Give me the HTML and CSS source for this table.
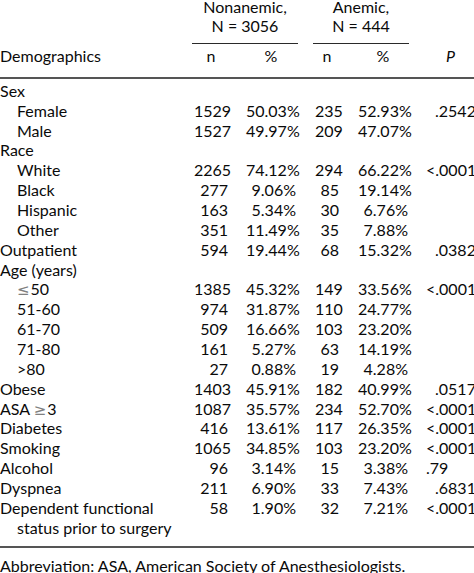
FILE: index.html
```html
<!DOCTYPE html>
<html lang="en">
<head>
<meta charset="utf-8">
<title>Demographics by anemia status</title>
<link rel="stylesheet" href="styles.css">
</head>
<body>
<div class="page">
<table class="tbl">
  <colgroup>
    <col class="c-label"><col class="c-n1"><col class="c-p1"><col class="c-n2"><col class="c-p2"><col class="c-p">
  </colgroup>
  <thead>
    <tr class="grp">
      <th></th>
      <th colspan="2" class="grp-cell"><div class="grp-box grp-non"><div class="g1">Nonanemic,</div><div class="g2">N = 3056</div></div></th>
      <th colspan="2" class="grp-cell"><div class="grp-box grp-an"><div class="g1">Anemic,</div><div class="g2">N = 444</div></div></th>
      <th></th>
    </tr>
    <tr class="sub">
      <th class="lbl">Demographics</th>
      <th class="hn n1">n</th>
      <th class="hn p1">%</th>
      <th class="hn n2">n</th>
      <th class="hn p2">%</th>
      <th class="hn pv"><i>P</i></th>
    </tr>
  </thead>
  <tbody>
    <tr class="first"><td class="lbl">Sex</td><td></td><td></td><td></td><td></td><td></td></tr>
    <tr><td class="lbl ind">Female</td><td class="num n1">1529</td><td class="num p1">50.03%</td><td class="num n2">235</td><td class="num p2">52.93%</td><td class="pv dec">.2542</td></tr>
    <tr><td class="lbl ind">Male</td><td class="num n1">1527</td><td class="num p1">49.97%</td><td class="num n2">209</td><td class="num p2">47.07%</td><td class="pv"></td></tr>
    <tr><td class="lbl">Race</td><td></td><td></td><td></td><td></td><td></td></tr>
    <tr><td class="lbl ind">White</td><td class="num n1">2265</td><td class="num p1">74.12%</td><td class="num n2">294</td><td class="num p2">66.22%</td><td class="pv">&lt;.0001</td></tr>
    <tr><td class="lbl ind">Black</td><td class="num n1">277</td><td class="num p1">9.06%</td><td class="num n2">85</td><td class="num p2">19.14%</td><td class="pv"></td></tr>
    <tr><td class="lbl ind">Hispanic</td><td class="num n1">163</td><td class="num p1">5.34%</td><td class="num n2">30</td><td class="num p2">6.76%</td><td class="pv"></td></tr>
    <tr><td class="lbl ind">Other</td><td class="num n1">351</td><td class="num p1">11.49%</td><td class="num n2">35</td><td class="num p2">7.88%</td><td class="pv"></td></tr>
    <tr><td class="lbl">Outpatient</td><td class="num n1">594</td><td class="num p1">19.44%</td><td class="num n2">68</td><td class="num p2">15.32%</td><td class="pv dec">.0382</td></tr>
    <tr><td class="lbl">Age (years)</td><td></td><td></td><td></td><td></td><td></td></tr>
    <tr><td class="lbl ind"><span class="rel">&le;</span>50</td><td class="num n1">1385</td><td class="num p1">45.32%</td><td class="num n2">149</td><td class="num p2">33.56%</td><td class="pv">&lt;.0001</td></tr>
    <tr><td class="lbl ind">51-60</td><td class="num n1">974</td><td class="num p1">31.87%</td><td class="num n2">110</td><td class="num p2">24.77%</td><td class="pv"></td></tr>
    <tr><td class="lbl ind">61-70</td><td class="num n1">509</td><td class="num p1">16.66%</td><td class="num n2">103</td><td class="num p2">23.20%</td><td class="pv"></td></tr>
    <tr><td class="lbl ind">71-80</td><td class="num n1">161</td><td class="num p1">5.27%</td><td class="num n2">63</td><td class="num p2">14.19%</td><td class="pv"></td></tr>
    <tr><td class="lbl ind">&gt;80</td><td class="num n1">27</td><td class="num p1">0.88%</td><td class="num n2">19</td><td class="num p2">4.28%</td><td class="pv"></td></tr>
    <tr><td class="lbl">Obese</td><td class="num n1">1403</td><td class="num p1">45.91%</td><td class="num n2">182</td><td class="num p2">40.99%</td><td class="pv dec">.0517</td></tr>
    <tr><td class="lbl">ASA <span class="rel">&ge;</span>3</td><td class="num n1">1087</td><td class="num p1">35.57%</td><td class="num n2">234</td><td class="num p2">52.70%</td><td class="pv">&lt;.0001</td></tr>
    <tr><td class="lbl">Diabetes</td><td class="num n1">416</td><td class="num p1">13.61%</td><td class="num n2">117</td><td class="num p2">26.35%</td><td class="pv">&lt;.0001</td></tr>
    <tr><td class="lbl">Smoking</td><td class="num n1">1065</td><td class="num p1">34.85%</td><td class="num n2">103</td><td class="num p2">23.20%</td><td class="pv">&lt;.0001</td></tr>
    <tr><td class="lbl">Alcohol</td><td class="num n1">96</td><td class="num p1">3.14%</td><td class="num n2">15</td><td class="num p2">3.38%</td><td class="pv">.79</td></tr>
    <tr><td class="lbl">Dyspnea</td><td class="num n1">211</td><td class="num p1">6.90%</td><td class="num n2">33</td><td class="num p2">7.43%</td><td class="pv dec">.6831</td></tr>
    <tr class="last"><td class="lbl hang">Dependent functional<br>status prior to surgery</td><td class="num n1">58</td><td class="num p1">1.90%</td><td class="num n2">32</td><td class="num p2">7.21%</td><td class="pv">&lt;.0001</td></tr>
  </tbody>
</table>
<p class="note">Abbreviation: ASA, American Society of Anesthesiologists.</p>
</div>
</body>
</html>
```
FILE: styles.css
```css
html, body {
  margin: 0;
  padding: 0;
  background: #ffffff;
  overflow: hidden;
}
body {
  width: 474px;
  height: 573px;
  font-family: "Lato", "Liberation Sans", sans-serif;
  font-size: 16px;
  line-height: 19.86px;
  color: #0a0a0a;
}
.page {
  width: 500px;
}
.tbl {
  border-collapse: collapse;
  table-layout: fixed;
  width: 500px;
}
.c-label { width: 194px; }
.c-n1 { width: 34px; }
.c-p1 { width: 68px; }
.c-n2 { width: 43px; }
.c-p2 { width: 69px; }
.c-p { width: 92px; }

th, td {
  padding: 0;
  font-weight: normal;
  white-space: nowrap;
  vertical-align: top;
}

/* group header row */
.grp-cell {
  text-align: center;
}
.grp-box {
  padding-bottom: 5px;
  border-bottom: 1.5px solid #2a2a2a;
}
.g1 { line-height: 14px; }
.g2 { line-height: 24px; }
.grp-non {
  margin: 0 -2px 0 -2px;
}
.grp-an {
  margin: 0 -1px 0 17px;
}

/* column headers */
.sub th {
  padding-top: 2px;
  padding-bottom: 11px;
  border-bottom: 2px solid #555555;
}
.sub .lbl { text-align: left; }
.hn { text-align: center; }
.sub .p1 { padding-left: 18px; }
.sub .n2 { padding-left: 19px; }
.sub .p2 { padding-left: 19px; }
.sub .pv { text-align: left; padding-left: 38px; }

/* body */
.first td { padding-top: 2px; }
.last td { padding-bottom: 8px; }
tbody tr:last-child td { border-bottom: 2px solid #555555; }

.lbl { text-align: left; }
.ind { padding-left: 17px; }
.hang { white-space: normal; padding-left: 17px; text-indent: -17px; }
.num { text-align: right; }
.p1 { padding-left: 18px; }
.n2 { padding-left: 19px; }
.p2 { padding-left: 19px; }
.pv { padding-left: 18px; text-align: left; }
.pv.dec { padding-left: 27px; }
.rel {
  font-family: "DejaVu Sans", sans-serif;
  font-size: 15px;
  line-height: 0;
  color: #808080;
  margin-right: 1px;
}

.note {
  margin: 0;
  padding-top: 8px;
}
```
